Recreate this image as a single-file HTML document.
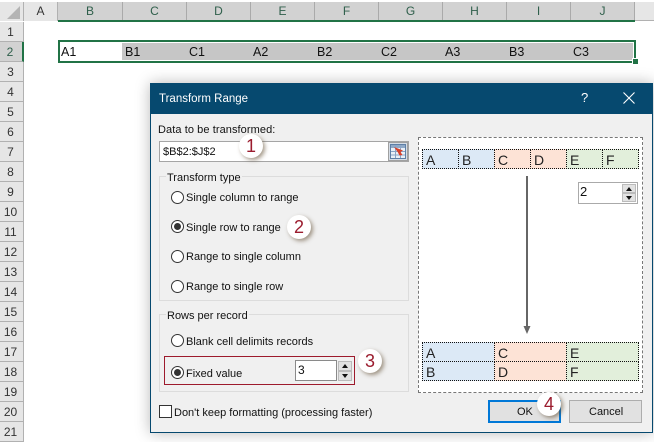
<!DOCTYPE html>
<html><head><meta charset="utf-8"><style>
html,body{margin:0;padding:0}
body{width:654px;height:434px;position:relative;overflow:hidden;background:#fff;font-family:"Liberation Sans",sans-serif;font-size:11px;color:#111}
div,span{position:absolute;box-sizing:border-box}
.t{white-space:nowrap;line-height:14px}
.ch{top:2px;height:19px;background:#d2d2d2;border-right:1px solid #aaa;text-align:center;line-height:19px;color:#2f5f4b;font-size:12px}
.rh{left:0;width:24px;height:20px;background:#e6e6e6;border-bottom:1px solid #b1b1b1;border-right:1px solid #b1b1b1;text-align:center;line-height:20px;font-size:12px;color:#333;padding-right:2px}
.c{top:44px;font-size:12.5px;line-height:16px;color:#111}
.r{width:13px;height:13px;border:1px solid #333;border-radius:50%;background:#fff;left:171px}
.r.on:after{content:"";position:absolute;left:2px;top:2px;width:7px;height:7px;border-radius:50%;background:#333}
.b{width:24px;height:24px;border-radius:50%;background:#fff;box-shadow:2px 2px 4px rgba(90,70,40,.55);color:#9b1c2e;font-size:18px;line-height:24px;text-align:center}
.g{border:1px solid #dcdcdc}
.sb{background:#e2e2e2;border:1px solid #bbb;width:14px;height:10px}
.up:after{content:"";position:absolute;left:3px;top:2px;border-left:3px solid transparent;border-right:3px solid transparent;border-bottom:4px solid #111}
.dn:after{content:"";position:absolute;left:3px;top:2px;border-left:3px solid transparent;border-right:3px solid transparent;border-top:4px solid #111}
.cell{border:1px dotted #111;font-size:14px;line-height:20px;padding-left:3px;color:#222}
.bl{background:#dce9f6}.or{background:#fde3d6}.gr{background:#e2efdb}
</style></head><body>
<div style="left:0;top:2px;width:654px;height:19px;background:#e6e6e6;border-bottom:1px solid #b1b1b1"></div>
<div style="left:0;top:2px;width:24px;height:19px;background:#e6e6e6;border-right:1px solid #b1b1b1"></div>
<div style="left:7px;top:6px;width:0;height:0;border-left:13px solid transparent;border-bottom:13px solid #b4b4b4"></div>
<div class="ch" style="left:24px;width:34px;background:#e6e6e6;color:#333;border-right:1px solid #b1b1b1">A</div>
<div class="ch" style="left:58px;width:65px">B</div>
<div class="ch" style="left:123px;width:64px">C</div>
<div class="ch" style="left:187px;width:64px">D</div>
<div class="ch" style="left:251px;width:64px">E</div>
<div class="ch" style="left:315px;width:64px">F</div>
<div class="ch" style="left:379px;width:64px">G</div>
<div class="ch" style="left:443px;width:64px">H</div>
<div class="ch" style="left:507px;width:64px">I</div>
<div class="ch" style="left:571px;width:64px">J</div>
<div style="left:58px;top:20px;width:577px;height:2px;background:#217346"></div>

<div class="rh" style="top:22px">1</div>
<div class="rh" style="top:42px;background:#d2d2d2;color:#2f5f4b;border-right:2px solid #217346">2</div>
<div class="rh" style="top:62px">3</div><div class="rh" style="top:82px">4</div><div class="rh" style="top:102px">5</div>
<div class="rh" style="top:122px">6</div><div class="rh" style="top:142px">7</div><div class="rh" style="top:162px">8</div>
<div class="rh" style="top:182px">9</div><div class="rh" style="top:202px">10</div><div class="rh" style="top:222px">11</div>
<div class="rh" style="top:242px">12</div><div class="rh" style="top:262px">13</div><div class="rh" style="top:282px">14</div>
<div class="rh" style="top:302px">15</div><div class="rh" style="top:322px">16</div><div class="rh" style="top:342px">17</div>
<div class="rh" style="top:362px">18</div><div class="rh" style="top:382px">19</div><div class="rh" style="top:402px">20</div>
<div class="rh" style="top:422px">21</div>

<div style="left:122px;top:43px;width:511px;height:17px;background:#c6c6c6"></div>
<div style="left:58px;top:40px;width:578px;height:23px;border:2px solid #217346"></div>
<div style="left:632px;top:58px;width:7px;height:7px;background:#217346;border:1px solid #fff"></div>
<div class="c" style="left:61px">A1</div><div class="c" style="left:125px">B1</div><div class="c" style="left:189px">C1</div>
<div class="c" style="left:253px">A2</div><div class="c" style="left:317px">B2</div><div class="c" style="left:381px">C2</div>
<div class="c" style="left:445px">A3</div><div class="c" style="left:509px">B3</div><div class="c" style="left:573px">C3</div>

<!-- dialog -->
<div style="left:150px;top:83px;width:503px;height:350px;background:#f0f0f0;border:1px solid #06496f;box-shadow:0 0 14px rgba(0,0,0,.28)"></div>
<div style="left:150px;top:83px;width:503px;height:31px;background:#06496f"></div>
<div class="t" style="left:159px;top:92px;color:#fff;font-size:11.5px">Transform Range</div>
<div class="t" style="left:581px;top:91px;color:#fff;font-size:13px">?</div>
<svg style="position:absolute;left:622px;top:91px" width="14" height="14"><path d="M1.5 1.5L12.5 12.5M12.5 1.5L1.5 12.5" stroke="#fff" stroke-width="1.1" fill="none"/></svg>

<div class="t" style="left:158px;top:123px;letter-spacing:.08px">Data to be transformed:</div>
<div style="left:159px;top:141px;width:250px;height:21px;background:#fff;border:1px solid #a5a5a5"></div>
<div class="t" style="left:163px;top:145px">$B$2:$J$2</div>
<div style="left:388px;top:142px;width:20px;height:19px;background:#d6dde6;border:1px solid #a0a0a0"></div>
<svg style="position:absolute;left:390px;top:144px" width="16" height="15"><rect x=".5" y=".5" width="15" height="14" fill="#eaf0f7" stroke="#5e7fa6"/><rect x="1" y="1" width="14" height="3" fill="#8fa9c8"/><path d="M1 7.5H15M1 11H15M5.5 1V14M10.5 1V14" stroke="#8aa5c6"/><path d="M4 3L13 6.5L10.5 8L12.5 11L9.5 11.5L8 8.5Z" fill="#d9402a"/></svg>

<div class="g" style="left:159px;top:176px;width:250px;height:125px"></div>
<div class="t" style="left:166px;top:171px;background:#f0f0f0;padding:0 1px">Transform type</div>
<div class="r" style="top:191px"></div><div class="t" style="left:186px;top:191px">Single column to range</div>
<div class="r on" style="top:220px"></div><div class="t" style="left:186px;top:221px">Single row to range</div>
<div class="r" style="top:250px"></div><div class="t" style="left:186px;top:250px">Range to single column</div>
<div class="r" style="top:280px"></div><div class="t" style="left:186px;top:280px">Range to single row</div>

<div class="g" style="left:159px;top:314px;width:250px;height:78px"></div>
<div class="t" style="left:166px;top:309px;background:#f0f0f0;padding:0 1px">Rows per record</div>
<div class="r" style="top:334px"></div><div class="t" style="left:186px;top:335px">Blank cell delimits records</div>
<div style="left:164px;top:356px;width:191px;height:29px;border:1px solid #9d1a2c"></div>
<div class="r on" style="top:366px"></div><div class="t" style="left:186px;top:367px">Fixed value</div>
<div style="left:295px;top:360px;width:42px;height:21px;background:#fff;border:1px solid #8a8a8a"></div>
<div class="t" style="left:298px;top:363px;font-size:12px">3</div>
<div class="sb up" style="left:338px;top:361px"></div><div class="sb dn" style="left:338px;top:371px"></div>

<div style="left:159px;top:405px;width:13px;height:13px;background:#fff;border:1px solid #333"></div>
<div class="t" style="left:174px;top:406px">Don't keep formatting (processing faster)</div>

<div style="left:418px;top:137px;width:225px;height:256px;background:#fff;border:1px dashed #777"></div>
<div class="cell bl" style="left:422px;top:149px;width:37px;height:20px">A</div>
<div class="cell bl" style="left:458px;top:149px;width:37px;height:20px">B</div>
<div class="cell or" style="left:494px;top:149px;width:37px;height:20px">C</div>
<div class="cell or" style="left:530px;top:149px;width:37px;height:20px">D</div>
<div class="cell gr" style="left:566px;top:149px;width:37px;height:20px">E</div>
<div class="cell gr" style="left:602px;top:149px;width:37px;height:20px">F</div>

<div style="left:578px;top:182px;width:60px;height:22px;background:#fff;border:1px solid #aaa"></div>
<div class="t" style="left:580px;top:185px;font-size:13px">2</div>
<div class="sb up" style="left:622px;top:184px;height:9px"></div><div class="sb dn" style="left:622px;top:193px;height:9px"></div>

<svg style="position:absolute;left:520px;top:175px" width="14" height="162"><path d="M7 1V152" stroke="#666" stroke-width="2" fill="none"/><path d="M3.5 151H10.5L7 159Z" fill="#666"/></svg>

<div class="cell bl" style="left:422px;top:342px;width:73px;height:20px">A</div>
<div class="cell or" style="left:494px;top:342px;width:73px;height:20px">C</div>
<div class="cell gr" style="left:566px;top:342px;width:73px;height:20px">E</div>
<div class="cell bl" style="left:422px;top:361px;width:73px;height:20px">B</div>
<div class="cell or" style="left:494px;top:361px;width:73px;height:20px">D</div>
<div class="cell gr" style="left:566px;top:361px;width:73px;height:20px">F</div>

<div style="left:488px;top:400px;width:73px;height:23px;background:#e1e1e1;border:2px solid #0078d7"></div>
<div class="t" style="left:517px;top:405px">OK</div>
<div style="left:569px;top:400px;width:73px;height:23px;background:#e1e1e1;border:1px solid #adadad"></div>
<div class="t" style="left:589px;top:405px">Cancel</div>

<div class="b" style="left:239px;top:134px">1</div>
<div class="b" style="left:287px;top:215px">2</div>
<div class="b" style="left:358px;top:349px">3</div>
<div class="b" style="left:537px;top:392px">4</div>
</body></html>
